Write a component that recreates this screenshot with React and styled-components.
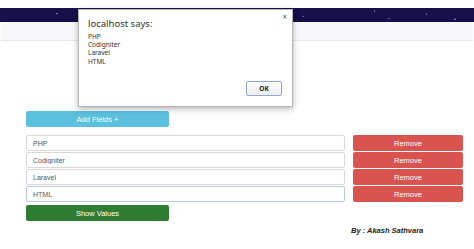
import { Fragment } from "react";
import styled, { createGlobalStyle } from "styled-components";

const Global = createGlobalStyle`
  html, body { margin: 0; padding: 0; background: #fff; }
  body { font-family: "Liberation Sans", Arial, sans-serif; width: 474px; height: 249px; overflow: hidden; }
  * { box-sizing: border-box; }
`;

const Page = styled.div`
  position: relative;
  width: 474px;
  height: 249px;
  padding-top: 8px;
`;

const Sky = styled.div`
  height: 14px;
  background-color: #15104a;
  background-image:
    radial-gradient(circle at 12% 40%, rgba(160,160,230,0.7) 0.6px, transparent 1px),
    radial-gradient(circle at 45% 70%, rgba(160,160,230,0.6) 0.6px, transparent 1px),
    radial-gradient(circle at 56% 30%, rgba(180,180,240,0.7) 0.6px, transparent 1px),
    radial-gradient(circle at 64% 60%, rgba(180,180,240,0.6) 0.6px, transparent 1px),
    radial-gradient(circle at 79% 20%, rgba(180,180,240,0.6) 0.6px, transparent 1px),
    radial-gradient(circle at 82% 75%, rgba(180,180,240,0.6) 0.6px, transparent 1px),
    radial-gradient(circle at 90% 45%, rgba(180,180,240,0.6) 0.6px, transparent 1px),
    radial-gradient(circle at 96% 80%, rgba(180,180,240,0.6) 0.6px, transparent 1px);
`;

const SubBar = styled.div`
  height: 19px;
  margin: 0 1px;
  background: #f8f8fa;
  border-bottom: 1px solid #e6e6ea;
`;

const Main = styled.div`
  padding: 70px 0 0 26px;
  display: flex;
  flex-direction: column;
`;

const Btn = styled.button`
  height: 16px;
  width: ${(p) => p.w || "143px"};
  border: none;
  border-radius: 2px;
  background: ${(p) => p.bg};
  color: #fff;
  font-family: "Liberation Sans", Arial, sans-serif;
  font-size: 7.5px;
  padding: 0;
  cursor: pointer;
`;

const Rows = styled.div`
  display: grid;
  grid-template-columns: 319px 110px;
  column-gap: 8px;
  row-gap: 1px;
  margin-top: 8px;
`;

const Field = styled.input`
  height: 16px;
  border: 1px solid ${(p) => (p.$focus ? "#b9cbe6" : "#d9d9d9")};
  border-radius: 2px;
  padding: 0 6px;
  font-family: "Liberation Sans", Arial, sans-serif;
  font-size: 7px;
  color: #555;
  background: #fff;
  outline: none;
`;

const Footer = styled.div`
  display: flex;
  flex-direction: column;
  margin-top: 3px;
`;

const Byline = styled.div`
  margin: 5px 0 0 325px;
  font-size: 7.5px;
  font-weight: bold;
  font-style: italic;
  color: #222;
`;

const Dialog = styled.div`
  position: absolute;
  left: 78px;
  top: 9px;
  width: 215px;
  height: 98px;
  background: #fff;
  border: 1px solid #b5b5b5;
  box-shadow: 0 2px 6px rgba(0, 0, 0, 0.3);
  font-family: "Noto Sans", "Open Sans", sans-serif;
  padding: 8px 10px 0 9px;
  display: flex;
  flex-direction: column;
`;

const Close = styled.span`
  position: absolute;
  right: 5px;
  top: 1px;
  font-size: 8px;
  color: #555;
`;

const Title = styled.div`
  font-size: 9.5px;
  color: #333;
  line-height: 12px;
`;

const Message = styled.div`
  margin-top: 3px;
  font-size: 6.5px;
  line-height: 8.2px;
  color: #333;
`;

const Actions = styled.div`
  margin-top: auto;
  margin-bottom: 10px;
  display: flex;
  justify-content: flex-end;
`;

const Ok = styled.button`
  width: 36px;
  height: 15px;
  border: 1px solid #8fa9d6;
  border-radius: 2px;
  background: linear-gradient(#fcfcfc, #efefef);
  font-family: "Noto Sans", "Open Sans", sans-serif;
  font-size: 6.5px;
  font-weight: bold;
  color: #222;
  padding: 0;
`;

const items = ["PHP", "Codigniter", "Laravel", "HTML"];

export default function App() {
  return (
    <>
      <Global />
      <Page>
        <Sky />
        <SubBar />
        <Main>
          <Btn bg="#5bc0de">Add Fields +</Btn>
          <Rows>
            {items.map((v, i) => (
              <Fragment key={v}>
                <Field defaultValue={v} $focus={i === 3} readOnly />
                <Btn bg="#d9534f" w="110px">Remove</Btn>
              </Fragment>
            ))}
          </Rows>
          <Footer>
            <Btn bg="#2e7d32">Show Values</Btn>
            <Byline>By : Akash Sathvara</Byline>
          </Footer>
        </Main>
        <Dialog>
          <Close>×</Close>
          <Title>localhost says:</Title>
          <Message>
            {items.map((v) => (
              <div key={v}>{v}</div>
            ))}
          </Message>
          <Actions>
            <Ok>OK</Ok>
          </Actions>
        </Dialog>
      </Page>
    </>
  );
}
